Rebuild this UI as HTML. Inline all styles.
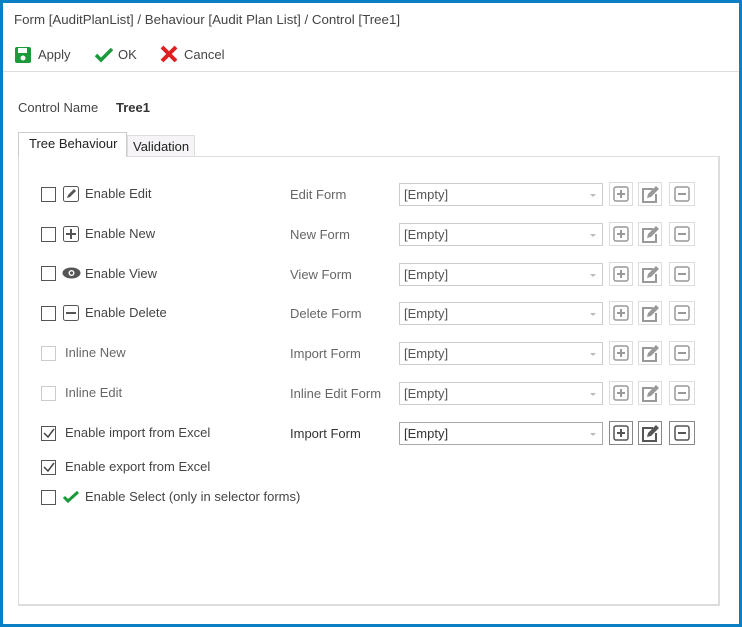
<!DOCTYPE html><html><head><style>
body{margin:0;width:742px;height:627px;overflow:hidden;font-family:"Liberation Sans",sans-serif;font-size:13px;color:#444}
.frame{position:absolute;left:0;top:0;width:736px;height:621px;border:3px solid #0a7fc4;background:#fff}
.a{position:absolute;white-space:nowrap}
.cb{position:absolute;width:15px;height:15px;border:1px solid #555;background:#fff;box-sizing:border-box}
.cb.d{border-color:#ccc}
.dd{position:absolute;left:399px;width:204px;height:23px;border:1px solid #bbb;box-sizing:border-box;font-size:13px;padding:3px 4px;color:#555}
.dd:after{content:"";position:absolute;right:6px;top:10px;border:3px solid transparent;border-top-color:#bbb}
.bt{position:absolute;width:24px;height:24px;border:1px solid #ddd;box-sizing:border-box}
</style></head><body><div class="frame"></div>
<div class="a" style="left:14px;top:12px;color:#444;font-size:13.3px">Form [AuditPlanList] / Behaviour [Audit Plan List] / Control [Tree1]</div>
<svg class="a" style="left:14px;top:46px" width="18" height="18"><rect x="1" y="1" width="16" height="16" rx="2" fill="#1a9a3a"/><rect x="4" y="2" width="9" height="5" fill="#fff"/><circle cx="9" cy="12" r="2.5" fill="#fff"/></svg>
<div class="a" style="left:38px;top:47px">Apply</div>
<svg class="a" style="left:94px;top:47px" width="20" height="16"><path d="M2 8l5 5 11-11" stroke="#1a9a3a" stroke-width="3.5" fill="none"/></svg>
<div class="a" style="left:118px;top:47px">OK</div>
<svg class="a" style="left:160px;top:45px" width="18" height="18"><path d="M2 2L16 16M16 2L2 16" stroke="#e02020" stroke-width="4"/></svg>
<div class="a" style="left:184px;top:47px">Cancel</div>
<div class="a" style="left:3px;top:71px;width:736px;height:1px;background:#ddd"></div>
<div class="a" style="left:18px;top:100px">Control Name</div>
<div class="a" style="left:116px;top:100px;font-weight:bold;color:#333">Tree1</div>
<div class="a" style="left:18px;top:156px;width:702px;height:450px;border:1px solid #ddd;border-right-width:2px;border-bottom-width:2px;box-sizing:border-box"></div>
<div class="a" style="left:18px;top:132px;width:109px;height:25px;border:1px solid #ccc;border-bottom:none;background:#fff;box-sizing:border-box;padding:3px 0 0 10px;color:#222">Tree Behaviour</div>
<div class="a" style="left:127px;top:135px;width:68px;height:21px;border:1px solid #ddd;border-bottom:none;background:#f6f4f6;box-sizing:border-box;padding:3px 0 0 5px;color:#222">Validation</div>
<div class="cb" style="left:41px;top:187px"></div><svg class="a" style="left:63px;top:186px" width="16" height="16"><rect x=".5" y=".5" width="15" height="15" rx="2" fill="none" stroke="#555"/><path d="M4 12l1-3 6-6 2 2-6 6z" fill="#555"/></svg><div class="a" style="left:85px;top:186px">Enable Edit</div>
<div class="cb" style="left:41px;top:227px"></div><svg class="a" style="left:63px;top:226px" width="16" height="16"><rect x=".5" y=".5" width="15" height="15" rx="2" fill="none" stroke="#555"/><path d="M8 3v10M3 8h10" stroke="#555" stroke-width="2"/></svg><div class="a" style="left:85px;top:226px">Enable New</div>
<div class="cb" style="left:41px;top:266px"></div><svg class="a" style="left:62px;top:267px" width="19" height="12"><ellipse cx="9.5" cy="6" rx="9" ry="5.5" fill="#555"/><circle cx="9.5" cy="6" r="3" fill="#fff"/><circle cx="9.5" cy="6" r="1.6" fill="#555"/></svg><div class="a" style="left:85px;top:266px">Enable View</div>
<div class="cb" style="left:41px;top:306px"></div><svg class="a" style="left:63px;top:305px" width="16" height="16"><rect x=".5" y=".5" width="15" height="15" rx="2" fill="none" stroke="#555"/><path d="M3 8h10" stroke="#555" stroke-width="2"/></svg><div class="a" style="left:85px;top:305px">Enable Delete</div>
<div class="cb d" style="left:41px;top:346px"></div><div class="a" style="left:65px;top:345px;color:#666">Inline New</div>
<div class="cb d" style="left:41px;top:386px"></div><div class="a" style="left:65px;top:385px;color:#666">Inline Edit</div>
<div class="cb" style="left:41px;top:426px"></div><svg class="a" style="left:43px;top:428px" width="12" height="11"><path d="M1 5l4 4 6-8" stroke="#444" stroke-width="1.5" fill="none"/></svg><div class="a" style="left:65px;top:425px">Enable import from Excel</div>
<div class="cb" style="left:41px;top:460px"></div><svg class="a" style="left:43px;top:462px" width="12" height="11"><path d="M1 5l4 4 6-8" stroke="#444" stroke-width="1.5" fill="none"/></svg><div class="a" style="left:65px;top:459px">Enable export from Excel</div>
<div class="cb" style="left:41px;top:490px"></div><svg class="a" style="left:62px;top:490px" width="18" height="14"><path d="M2 7l4 4 10-9" stroke="#1a9a3a" stroke-width="3" fill="none"/></svg><div class="a" style="left:85px;top:489px">Enable Select (only in selector forms)</div>
<div id="rc"></div>
<script>
var L=["Edit Form","New Form","View Form","Delete Form","Import Form","Inline Edit Form","Import Form"],Y=[194,234,274,313,353,393,433],h="";
for(var i=0;i<7;i++){var y=Y[i],en=i==6,c=en?"#555":"#999",b=en?"#888":"#ddd";
h+='<div class="a" style="left:290px;top:'+(y-7)+'px;color:'+(en?'#333':'#666')+'">'+L[i]+'</div>';
h+='<div class="dd" style="top:'+(y-11)+'px;border-color:'+(en?'#aaa':'#ccc')+';color:'+(en?'#333':'#555')+'">[Empty]</div>';
h+='<div class="bt" style="left:609px;top:'+(y-12)+'px;border-color:'+b+'"><svg width="22" height="22"><rect x="4" y="4" width="14" height="14" rx="2" fill="none" stroke="'+c+'" stroke-width="1.5"/><path d="M11 7v8M7 11h8" stroke="'+c+'" stroke-width="2"/></svg></div>';
h+='<div class="bt" style="left:638px;top:'+(y-12)+'px;border-color:'+b+'"><svg width="22" height="22"><path d="M14 6H4v13h13v-8" fill="none" stroke="'+c+'" stroke-width="2"/><path d="M8 15l1-4 8-8 3 3-8 8z" fill="'+c+'"/></svg></div>';
h+='<div class="bt" style="left:669px;top:'+(y-12)+'px;border-color:'+b+';width:26px"><svg width="24" height="22"><rect x="5" y="4" width="14" height="14" rx="2" fill="none" stroke="'+c+'" stroke-width="1.5"/><path d="M8 11h8" stroke="'+c+'" stroke-width="2"/></svg></div>';}
document.getElementById("rc").innerHTML=h;
</script>
</body></html>
